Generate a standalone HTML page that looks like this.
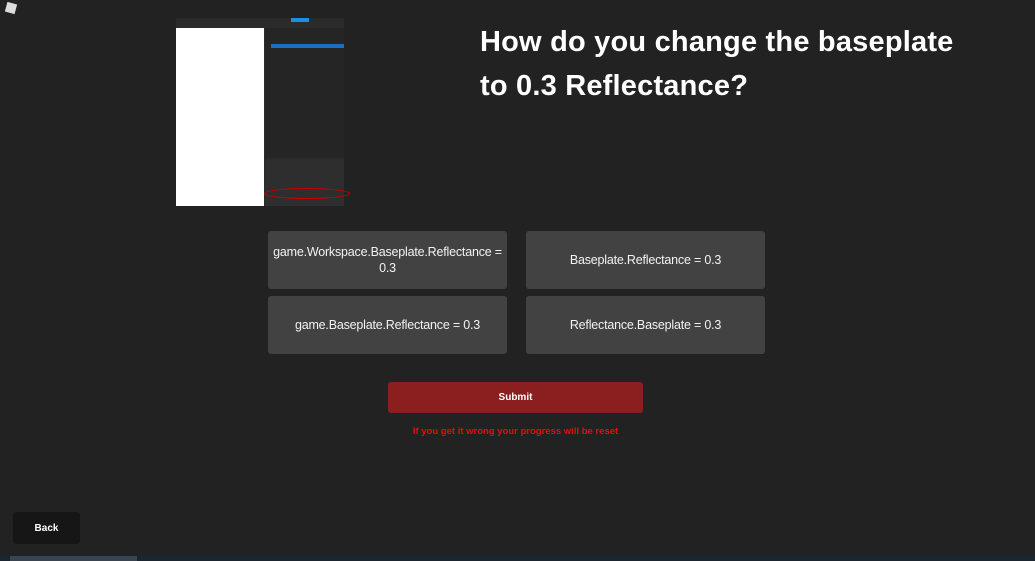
<!DOCTYPE html>
<html><head><style>
body{margin:0;width:1035px;height:561px;background:#222222;overflow:hidden;position:relative;font-family:"Liberation Sans",sans-serif;color:#fff}
.a{position:absolute}
.opt{position:absolute;background:#424242;border-radius:3px;display:flex;align-items:center;justify-content:center;text-align:center;font-size:12.5px;color:#f2f2f2;line-height:16px;letter-spacing:-0.2px}
</style></head><body>
<div class="a" style="left:6px;top:3px;width:10px;height:10px;background:#ddd;transform:rotate(15deg)"></div>
<div class="a" style="left:176px;top:18px;width:168px;height:188px;background:#2b2b2b">
 <div class="a" style="left:0;top:10px;width:88px;height:178px;background:#fff"></div>
 <div class="a" style="left:89px;top:10px;width:79px;height:130px;background:#252525"></div>
 <div class="a" style="left:95px;top:26px;width:73px;height:4px;background:#1b6ec2"></div>
 <div class="a" style="left:89px;top:142px;width:79px;height:46px;background:#2e2e2e"></div>
 <div class="a" style="left:88px;top:170px;width:84px;height:9px;border:1px solid #c00;border-radius:50%"></div>
 <div class="a" style="left:115px;top:0;width:18px;height:4px;background:#1b8fe0"></div>
</div>
<div class="a" style="left:480px;top:20px;font-size:29px;font-weight:bold;line-height:44px;width:540px;letter-spacing:0.2px">How do you change the baseplate<br>to 0.3 Reflectance?</div>
<div class="opt" style="left:268px;top:231px;width:239px;height:58px">game.Workspace.Baseplate.Reflectance =<br>0.3</div>
<div class="opt" style="left:526px;top:231px;width:239px;height:58px">Baseplate.Reflectance = 0.3</div>
<div class="opt" style="left:268px;top:296px;width:239px;height:58px">game.Baseplate.Reflectance = 0.3</div>
<div class="opt" style="left:526px;top:296px;width:239px;height:58px">Reflectance.Baseplate = 0.3</div>
<div class="a" style="left:388px;top:382px;width:255px;height:31px;background:#8b1e1e;border-radius:3px;font-size:10px;font-weight:bold;display:flex;align-items:center;justify-content:center">Submit</div>
<div class="a" style="left:388px;top:426px;width:255px;text-align:center;font-size:9.5px;font-weight:bold;color:#e01010">If you get it wrong your progress will be reset</div>
<div class="a" style="left:13px;top:512px;width:67px;height:32px;background:#161616;border-radius:3px;font-size:10px;font-weight:bold;display:flex;align-items:center;justify-content:center">Back</div>
<div class="a" style="left:0;top:555px;width:1035px;height:6px;background:#1b2530"></div>
<div class="a" style="left:10px;top:556px;width:127px;height:5px;background:#3a4350"></div>
</body></html>
